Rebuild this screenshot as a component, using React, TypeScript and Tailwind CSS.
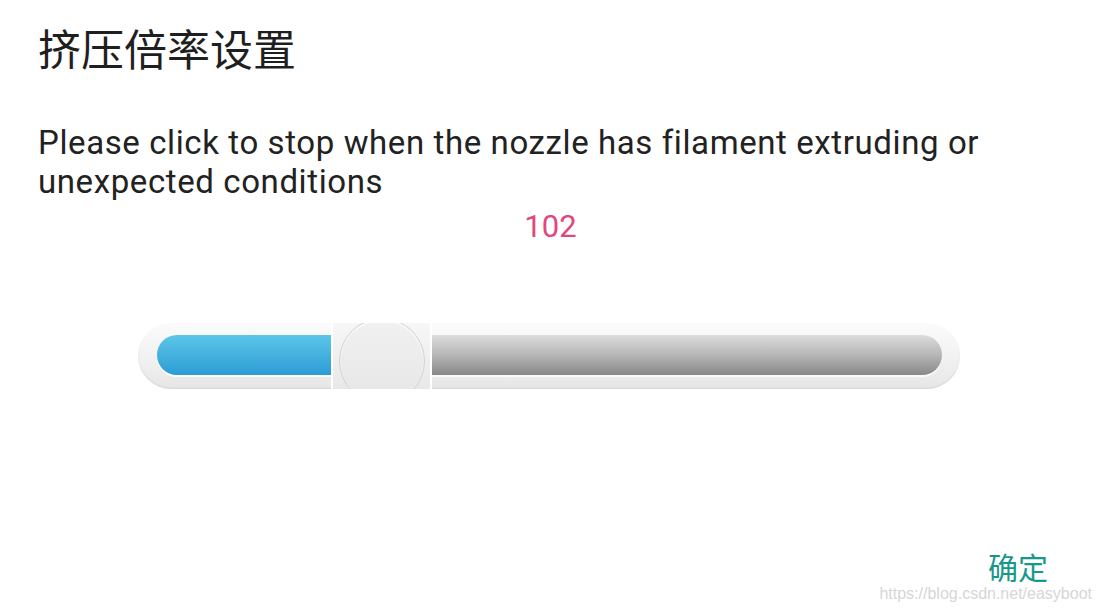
import React from 'react'

// Extrusion multiplier dialog — title, hint, value readout, skeuomorphic slider, confirm.

const CJK = { fontFamily: '"Noto Sans CJK SC", "Noto Sans", sans-serif' }
const LATIN = { fontFamily: 'Roboto, "Noto Sans", sans-serif' }

function Slider() {
  return (
    <div className="mx-[138px] w-[822px] h-[66px] rounded-full bg-gradient-to-b from-[#fbfbfb] via-[#f2f2f2] to-[#e6e6e6] shadow-[inset_0_-1px_2px_rgba(0,0,0,0.08)] flex items-center pl-[19px] pr-[18px]">
      {/* filled part */}
      <div className="w-[174px] h-[40px] -mt-[2px] rounded-l-full bg-gradient-to-b from-[#5cc6e8] to-[#2b9cd4] shadow-[0_2px_0_#ffffff]" />
      {/* thumb */}
      <div className="relative w-[101px] h-[66px] shrink-0 overflow-hidden border-x-2 border-white bg-gradient-to-b from-[#f7f7f7] to-[#e8e8e8] flex items-center justify-center">
        <div className="w-[86px] h-[86px] mt-[10px] shrink-0 rounded-full border border-[#d2d2d2] bg-gradient-to-b from-[#f1f1f1] to-[#e6e6e6] shadow-[inset_0_1px_2px_#ffffff]" />
      </div>
      {/* remaining part */}
      <div className="flex-1 h-[40px] -mt-[2px] rounded-r-full bg-gradient-to-b from-[#dcdcdc] via-[#b6b6b6] to-[#888888] shadow-[0_2px_0_#fafafa]" />
    </div>
  )
}

export default function App() {
  return (
    <div className="w-[1101px] h-[612px] bg-white flex flex-col overflow-hidden">
      <div className="px-[38px]">
        <h1 className="mt-[22px] text-[43px] leading-[50px] text-[#1f1f1f]" style={CJK}>
          挤压倍率设置
        </h1>
        <p className="mt-[51px] text-[33px] leading-[39px] tracking-[0.6px] text-[#222222]" style={LATIN}>
          Please click to stop when the nozzle has filament extruding or unexpected conditions
        </p>
      </div>
      <div className="mt-[6px] text-center text-[31px] leading-[40px] text-[#e0487d]" style={LATIN}>
        102
      </div>
      <div className="mt-[76px]">
        <Slider />
      </div>
      <div className="mt-auto flex flex-col items-end pr-[9px] pb-[8px]">
        <button className="mr-[44px] text-[30px] leading-[36px] text-[#16998a]" style={CJK}>
          确定
        </button>
        <span className="text-[16px] leading-[20px] text-[#d6d6d6]" style={{ fontFamily: '"Liberation Sans", Arial, sans-serif' }}>
          https://blog.csdn.net/easyboot
        </span>
      </div>
    </div>
  )
}
